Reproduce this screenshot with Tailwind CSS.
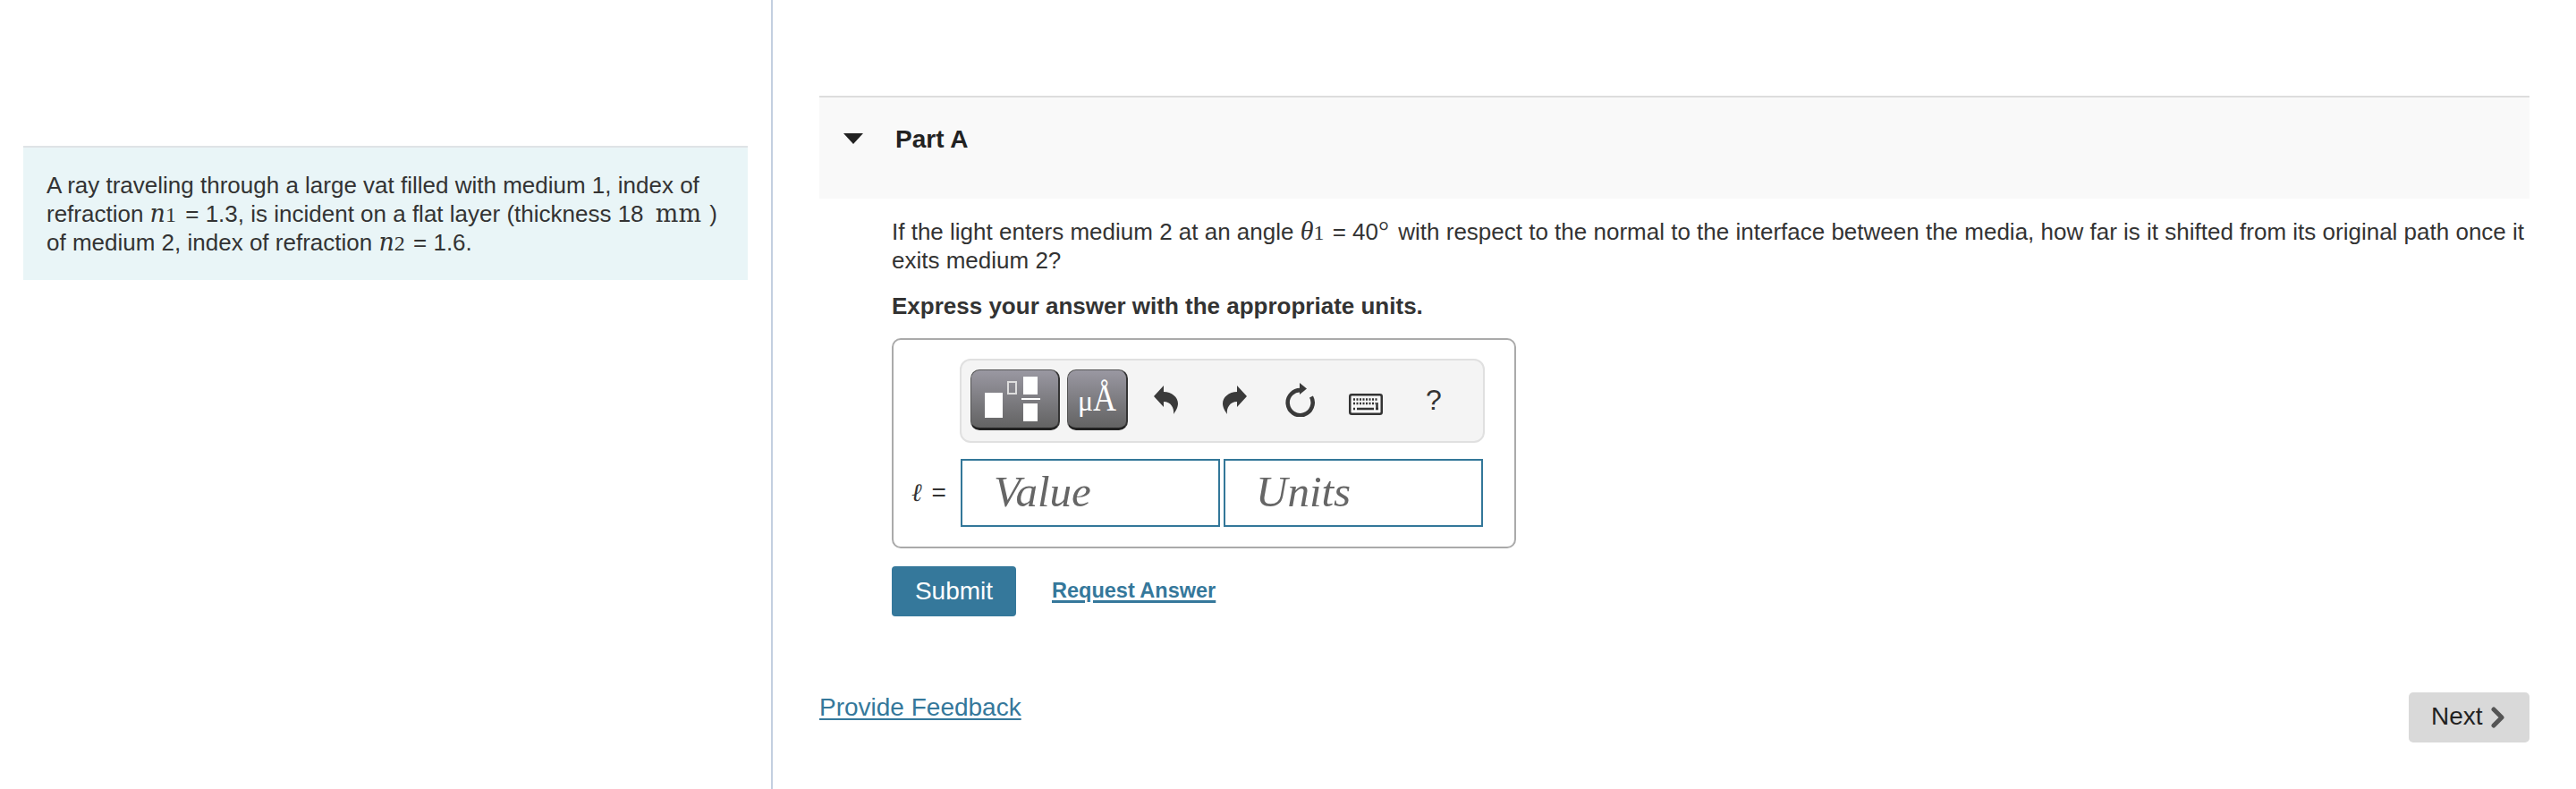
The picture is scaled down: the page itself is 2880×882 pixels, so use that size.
<!DOCTYPE html>
<html lang="en">
<head>
    <meta charset="UTF-8">
    <title>Part A</title>
    <script src="https://cdn.jsdelivr.net/npm/@tailwindcss/browser@4"></script>
</head>
<body class="[font-family:'Liberation_Sans',sans-serif] text-[#333] bg-white">
<div class="flex h-[882px] overflow-hidden">
    <!-- Left pane -->
    <div class="w-[864px] shrink-0 border-r-2 border-[#c3cfe0] pt-[163px] pl-[26px] pr-[26px]">
        <div class="border-t-2 border-[#dfe3e6] bg-[#e9f5f7] h-[150px] pt-[26px] px-[26px] text-[26px] leading-[32px] whitespace-nowrap">
            A ray traveling through a large vat filled with medium 1, index of<br>refraction
            <span class="[font-family:'DejaVu_Serif',serif] italic text-[27px] leading-none">n</span><sub class="[font-family:'Liberation_Serif',serif] text-[24px] static">1</sub>
            <span class="ml-[3px]">= 1.3, is incident on a flat layer (thickness 18</span> <span class="[font-family:'DejaVu_Serif',serif] ml-[6px] text-[27px] leading-none">mm</span> <span class="ml-[2px]">)</span><br>of medium 2, index of refraction
            <span class="[font-family:'DejaVu_Serif',serif] italic text-[27px] leading-none">n</span><sub class="[font-family:'Liberation_Serif',serif] text-[24px] static">2</sub>
            <span class="ml-[2px]">= 1.6.</span>
        </div>
    </div>

    <!-- Right pane -->
    <div class="flex-1 pt-[107px] pl-[52px] pr-[52px]">
        <div class="border-t-2 border-[#dddddd] bg-[#f9f9f9] h-[115px] pt-[31px] pl-[27px] flex items-start">
            <svg width="22" height="12" viewBox="0 0 22 12" class="mt-[9px]"><path d="M0 0H22L11 12Z" fill="#222"/></svg>
            <h2 class="ml-[36px] text-[28px] leading-[32px] font-bold text-[#222]">Part A</h2>
        </div>

        <div class="pl-[81px]">
            <p class="mt-[21px] text-[26px] leading-[32px] whitespace-nowrap">If the light enters medium 2 at an angle
                <span class="[font-family:'Liberation_Serif',serif] italic text-[30px] leading-none">θ</span><sub class="[font-family:'Liberation_Serif',serif] text-[24px] static">1</sub>
                <span class="ml-[2px]">= 40</span><span class="[font-family:'Liberation_Serif',serif] text-[30px] leading-none">°</span>
                <span class="ml-[3px]">with respect to the normal to the interface between the media, how far is it shifted from its original path once it</span><br>exits medium 2?</p>
            <p class="mt-[19px] text-[26px] leading-[32px] font-bold">Express your answer with the appropriate units.</p>

            <!-- Answer box -->
            <div class="mt-[20px] w-[698px] h-[235px] border-2 border-[#aaaaaa] rounded-[10px] pt-[21px]">
                <div class="ml-[74px] w-[587px] h-[94px] border-2 border-[#e0e0e0] bg-[#f4f4f4] rounded-[12px] flex items-start pt-[10px] pl-[10px]">
                    <div class="relative w-[100px] h-[68px] rounded-[10px] border border-[#555] border-r-2 border-b-[3px] border-r-[#333] border-b-[#222] bg-linear-to-b from-[#9a98a2] to-[#636363]">
                        <span class="absolute left-[15px] top-[25px] w-[20px] h-[28px] bg-white"></span>
                        <span class="absolute left-[40px] top-[12px] w-[11px] h-[15px] border-2 border-[#ddd]"></span>
                        <span class="absolute left-[58px] top-[7px] w-[16px] h-[20px] bg-white"></span>
                        <span class="absolute left-[56px] top-[31px] w-[21px] h-[2px] bg-white"></span>
                        <span class="absolute left-[58px] top-[37px] w-[16px] h-[20px] bg-white"></span>
                    </div>
                    <div class="ml-[8px] w-[68px] h-[68px] rounded-[10px] border border-[#555] border-r-2 border-b-[3px] border-r-[#333] border-b-[#222] bg-linear-to-b from-[#9a98a2] to-[#636363] text-white [font-family:'Liberation_Serif',serif] text-[36px] leading-[66px] text-center whitespace-nowrap">
                        <span class="text-[32px]">μ</span><span class="inline-block scale-y-[1.2] origin-[50%_70%]">Å</span>
                    </div>
                    <!-- undo -->
                    <svg width="27" height="32" viewBox="0 0 27 32" class="ml-[29px] mt-[18px]"><path d="M0 12L11 0V7C20 7 27 13 27 20C27 25 24 29 22 32C23 25 19 18 11 18V24Z" fill="#3a3a3a"/></svg>
                    <!-- redo -->
                    <svg width="27" height="32" viewBox="0 0 27 32" class="ml-[50px] mt-[18px] -scale-x-100"><path d="M0 12L11 0V7C20 7 27 13 27 20C27 25 24 29 22 32C23 25 19 18 11 18V24Z" fill="#3a3a3a"/></svg>
                    <!-- reset -->
                    <svg width="33" height="38" viewBox="0 0 33 38" class="ml-[43px] mt-[15px]"><path d="M18 8.2A14 14 0 1 0 29 15.5" fill="none" stroke="#3a3a3a" stroke-width="4.5"/><path d="M16 0L24 6.5L16 13Z" fill="#3a3a3a"/></svg>
                    <!-- keyboard -->
                    <svg width="38" height="24" viewBox="0 0 38 24" class="ml-[38px] mt-[27px]">
                        <rect x="1.25" y="1.25" width="35.5" height="21.5" rx="2" fill="#f7f7f7" stroke="#333" stroke-width="2.5"/>
                        <path d="M5 6.5H33M5 11H30" stroke="#333" stroke-width="2.5" stroke-dasharray="2 1.5" fill="none"/>
                        <path d="M31.5 10V16M9 17H28M5 17H7M30 17H33" stroke="#333" stroke-width="2.5" fill="none"/>
                    </svg>
                    <span class="ml-[48px] mt-[16px] text-[32px] leading-[36px] text-[#333]">?</span>
                </div>
                <div class="mt-[18px] flex items-center">
                    <div class="w-[75px] pl-[20px] text-[28px] whitespace-nowrap"><span class="[font-family:'DejaVu_Serif',serif] italic">ℓ</span><span class="ml-[3px]"> =</span></div>
                    <input placeholder="Value" class="w-[290px] h-[76px] border-2 border-[#337799] pl-[35px] pb-[3px] [font-family:'Liberation_Serif',serif] italic text-[49px] placeholder:text-[#666] outline-none">
                    <input placeholder="Units" class="ml-[4px] w-[290px] h-[76px] border-2 border-[#337799] pl-[34px] pb-[3px] [font-family:'Liberation_Serif',serif] italic text-[49px] placeholder:text-[#666] outline-none">
                </div>
            </div>

            <div class="mt-[20px] flex items-center">
                <button class="w-[139px] h-[56px] rounded-[4px] bg-[#35789b] text-white text-[28px] leading-[32px] pb-[1px]">Submit</button>
                <a href="#" class="ml-[40px] text-[23.5px] font-bold text-[#35789b] underline decoration-[3px] underline-offset-[3px]">Request Answer</a>
            </div>
        </div>

        <div class="mt-[85px] flex justify-between items-start">
            <a href="#" class="mt-[1px] text-[28px] leading-[32px] text-[#35789b] underline decoration-2 underline-offset-[3px]">Provide Feedback</a>
            <button class="w-[135px] h-[56px] rounded-[5px] bg-[#d9d9d9] flex items-center pl-[25px] pb-[3px] text-[28px] text-[#222]">Next
                <svg width="15" height="24" viewBox="0 0 15 24" class="ml-[9px] mt-[3px]"><path d="M3 3L12 12L3 21" fill="none" stroke="#555" stroke-width="5" stroke-linecap="round" stroke-linejoin="round"/></svg>
            </button>
        </div>
    </div>
</div>
</body>
</html>
